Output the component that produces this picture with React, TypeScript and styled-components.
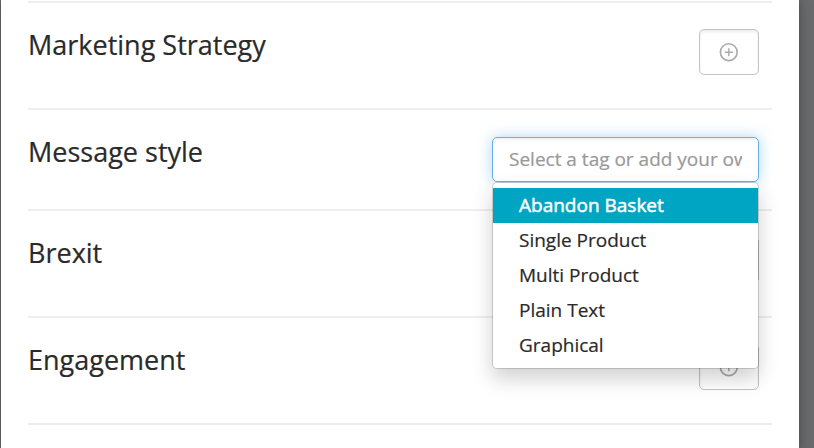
import React, { useState } from "react";
import styled, { createGlobalStyle } from "styled-components";

const GlobalStyle = createGlobalStyle`
  *, *::before, *::after { box-sizing: border-box; }
  body {
    margin: 0;
    background: #6a6b6d;
    color: #2a2a2a;
    font-family: "Open Sans", "Noto Sans", sans-serif;
    -webkit-text-stroke: 0.2px;
    overflow: hidden;
  }
`;

const Backdrop = styled.div`
  min-height: 100vh;
  display: flex;
  padding: 0 15px 0 1px;
`;

const Panel = styled.main`
  flex: 1;
  min-width: 0;
  padding: 1px 27px 0;
  background: #fff;
  box-shadow: 0 0 12px rgba(0, 0, 0, 0.35);
`;

const Row = styled.section`
  display: flex;
  justify-content: space-between;
  align-items: flex-start;
  padding: 26px 13px 0 0;
  border-top: 2px solid #eee;
`;

const TagRow = styled(Row)<{ $editing?: boolean }>`
  padding-bottom: ${(p) => (p.$editing ? 27 : 33)}px;
`;

const Title = styled.h2`
  margin: 0;
  font-size: 27px;
  line-height: 31px;
  font-weight: 400;
`;

const AddButton = styled.button`
  display: flex;
  align-items: center;
  justify-content: center;
  width: 60px;
  height: 46px;
  padding: 0;
  color: #aaa;
  background: #fff;
  border: 1px solid #c4c4c4;
  border-radius: 5px;
  box-shadow: inset 0 2px 3px rgba(0, 0, 0, 0.08);
`;

const Picker = styled.div`
  position: relative;
  width: 267px;
  padding-top: 1px;
`;

const TagInput = styled.input`
  display: block;
  width: 100%;
  height: 45px;
  padding: 0 16px 2px;
  font: inherit;
  font-size: 19px;
  color: #2a2a2a;
  background: #fff;
  border: 1px solid #66afe9;
  border-radius: 5px;
  outline: none;
  box-shadow: inset 0 2px 3px rgba(0, 0, 0, 0.06), 0 0 14px rgba(102, 175, 233, 0.5);

  &::placeholder {
    color: #999;
    opacity: 1;
  }
`;

const Menu = styled.ul`
  position: absolute;
  z-index: 1;
  top: 100%;
  left: 0;
  right: 0;
  margin: 0;
  padding: 5px 0;
  list-style: none;
  background: #fff;
  background-clip: padding-box;
  border: 1px solid rgba(0, 0, 0, 0.15);
  border-radius: 5px;
  box-shadow: 0 10px 20px rgba(0, 0, 0, 0.18);
`;

const Option = styled.li<{ $active: boolean }>`
  padding: 0 26px;
  font-size: 19px;
  line-height: 35px;
  white-space: nowrap;
  color: ${(p) => (p.$active ? "#fff" : "inherit")};
  background: ${(p) => (p.$active ? "#00a5c4" : "transparent")};
  -webkit-text-stroke: ${(p) => (p.$active ? "0.5px" : "0.2px")};
`;

const PlusCircle = () => (
  <svg width="20" height="20" viewBox="0 0 20 20" fill="none" stroke="currentColor" aria-hidden="true">
    <circle cx="9.8" cy="10.2" r="8.4" strokeWidth="1.6" />
    <path d="M9.8 6.2v8M5.8 10.2h8" strokeWidth="1.4" />
  </svg>
);

const groups = ["Marketing Strategy", "Message style", "Brexit", "Engagement"];
const tags = ["Abandon Basket", "Single Product", "Multi Product", "Plain Text", "Graphical"];

function TagPicker({ label }: { label: string }) {
  const [active, setActive] = useState(0);
  const [value, setValue] = useState("");
  return (
    <Picker>
      <TagInput
        type="text"
        role="combobox"
        aria-label={label}
        aria-expanded="true"
        aria-controls="tag-options"
        aria-activedescendant={`tag-${active}`}
        placeholder="Select a tag or add your own"
        value={value}
        onChange={(e) => setValue(e.target.value)}
      />
      <Menu id="tag-options" role="listbox" aria-label={label}>
        {tags.map((tag, i) => (
          <Option
            key={tag}
            id={`tag-${i}`}
            role="option"
            aria-selected={i === active}
            $active={i === active}
            onMouseEnter={() => setActive(i)}
            onClick={() => setValue(tag)}
          >
            {tag}
          </Option>
        ))}
      </Menu>
    </Picker>
  );
}

export default function App() {
  const editing = "Message style";
  return (
    <>
      <GlobalStyle />
      <Backdrop>
        <Panel>
          {groups.map((name) => (
            <TagRow key={name} $editing={name === editing}>
              <Title>{name}</Title>
              {name === editing ? (
                <TagPicker label={name} />
              ) : (
                <AddButton type="button" aria-label={`Add ${name} tag`}>
                  <PlusCircle />
                </AddButton>
              )}
            </TagRow>
          ))}
          <Row />
        </Panel>
      </Backdrop>
    </>
  );
}
